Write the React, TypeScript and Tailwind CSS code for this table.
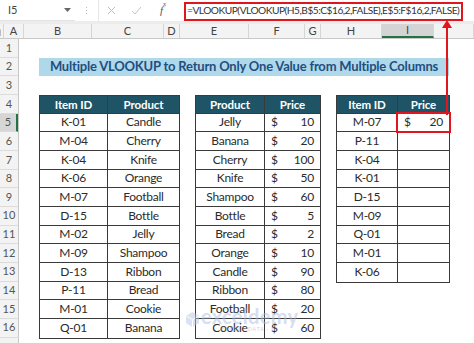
import React from "react";

const leftRows = [
  ["K-01", "Candle"],
  ["M-04", "Cherry"],
  ["K-04", "Knife"],
  ["K-06", "Orange"],
  ["M-07", "Football"],
  ["D-15", "Bottle"],
  ["M-02", "Jelly"],
  ["M-09", "Shampoo"],
  ["D-13", "Ribbon"],
  ["P-11", "Bread"],
  ["M-01", "Cookie"],
  ["Q-01", "Banana"],
];

const priceRows = [
  ["Jelly", "10"],
  ["Banana", "20"],
  ["Cherry", "100"],
  ["Knife", "50"],
  ["Shampoo", "60"],
  ["Bottle", "5"],
  ["Bread", "2"],
  ["Orange", "10"],
  ["Candle", "90"],
  ["Ribbon", "80"],
  ["Football", "20"],
  ["Cookie", "60"],
];

const lookupRows = [
  ["M-07", "20"],
  ["P-11", ""],
  ["K-04", ""],
  ["K-01", ""],
  ["D-15", ""],
  ["M-09", ""],
  ["Q-01", ""],
  ["M-01", ""],
  ["K-06", ""],
];

const columns = [
  { label: "A", w: "w-[20px]" },
  { label: "B", w: "w-[68px]" },
  { label: "C", w: "w-[72px]" },
  { label: "D", w: "w-[16px]" },
  { label: "E", w: "w-[69px]" },
  { label: "F", w: "w-[56px]" },
  { label: "G", w: "w-[16px]" },
  { label: "H", w: "w-[61px]" },
  { label: "I", w: "w-[52px]" },
  { label: "", w: "w-[40px]" },
];

function FormulaBar() {
  return (
    <div className="flex h-[21px] items-center bg-white">
      <div className="flex h-full w-[75px] items-center justify-between border-b border-[#e3e3e3] pl-[8px] pr-[4px] text-[11px] text-[#444]">
        <span>I5</span>
        <svg width="7" height="4" viewBox="0 0 7 4">
          <path d="M0 0h7L3.5 4z" fill="#666" />
        </svg>
      </div>
      <div className="flex h-full w-[23px] flex-col items-center justify-center gap-[2px]">
        <span className="h-[1px] w-[1px] bg-[#bbb]" />
        <span className="h-[1px] w-[1px] bg-[#bbb]" />
        <span className="h-[1px] w-[1px] bg-[#bbb]" />
      </div>
      <div className="flex h-full w-[86px] items-center border-l border-[#e6e6e6]">
        <div className="flex w-[24px] justify-center">
          <svg width="9" height="9" viewBox="0 0 9 9">
            <path d="M1 1l7 7M8 1L1 8" stroke="#bdbdbd" strokeWidth="1" />
          </svg>
        </div>
        <div className="flex w-[27px] justify-center">
          <svg width="11" height="9" viewBox="0 0 11 9">
            <path d="M1 5l3 3 6-7" stroke="#c4c4c4" strokeWidth="1" fill="none" />
          </svg>
        </div>
        <div className="flex w-[26px] justify-center font-['Liberation_Serif',serif] text-[11px] italic text-[#555]">
          f<sub className="text-[7px]">x</sub>
        </div>
      </div>
      <div className="mt-[1px] flex h-[19px] w-[279px] items-center overflow-hidden whitespace-nowrap border-2 border-[#e0161e] pl-[1px] text-[10.2px] tracking-[-0.5px] text-[#333]">
        =VLOOKUP(VLOOKUP(H5,B$5:C$16,2,FALSE),E$5:F$16,2,FALSE)
      </div>
    </div>
  );
}

function ColumnHeaders() {
  return (
    <div className="flex h-[15px] border-b border-[#c8c8c8] bg-[#f3f3f3] text-[11px] text-[#444]">
      <div className="relative w-[19px] border-r border-[#d6d6d6]">
        <svg className="absolute bottom-[2px] right-[2px]" width="7" height="7" viewBox="0 0 7 7">
          <path d="M7 0v7H0z" fill="#bcbcbc" />
        </svg>
      </div>
      {columns.map((c) => (
        <div
          key={c.w + c.label}
          className={`${c.w} flex shrink-0 items-center justify-center border-r border-[#d6d6d6] ${
            c.label === "I" ? "border-b-2 border-b-[#217346] bg-[#d4d4d4]" : ""
          }`}
        >
          {c.label}
        </div>
      ))}
    </div>
  );
}

function RowHeaders() {
  const rows = Array.from({ length: 17 }, (_, i) => i + 1);
  return (
    <div className="w-[19px] shrink-0 border-r border-[#c8c8c8] bg-[#f3f3f3] text-[11px] text-[#555]">
      {rows.map((n) => (
        <div
          key={n}
          className={`flex h-[18.67px] items-center justify-center border-b border-[#dcdcdc] ${
            n === 5 ? "border-r-2 border-r-[#217346] bg-[#d6d6d6]" : ""
          }`}
        >
          {n < 17 ? n : ""}
        </div>
      ))}
    </div>
  );
}

function HeadCell({ w, children }: { w: string; children: React.ReactNode }) {
  return (
    <div className={`${w} flex items-center justify-center border-r border-[#3a3a3a] font-bold text-white last:border-r-0`}>
      {children}
    </div>
  );
}

function Table({
  widths,
  heads,
  children,
}: {
  widths: [string, string];
  heads: [string, string];
  children: React.ReactNode;
}) {
  return (
    <div className="flex flex-col self-start border border-[#3a3a3a]">
      <div className="flex h-[17.67px] border-b border-[#3a3a3a] bg-[#1e5466] text-[11.5px] tracking-[-0.1px]">
        <HeadCell w={widths[0]}>{heads[0]}</HeadCell>
        <HeadCell w={widths[1]}>{heads[1]}</HeadCell>
      </div>
      {children}
    </div>
  );
}

function Price({ value }: { value: string }) {
  return (
    <div className="flex flex-1 items-center justify-between px-[6px]">
      <span>{value ? "$" : ""}</span>
      <span>{value}</span>
    </div>
  );
}

function Sheet() {
  return (
    <div className="flex flex-1 flex-col text-[12px] tracking-[-0.25px] text-[#2b2b2b]">
      <div className="h-[18.67px]" />
      <div className="flex h-[18.67px] pl-[20px]">
        <div className="flex w-[410px] items-center justify-center whitespace-nowrap bg-[#afd8ea] text-[13px] tracking-[-0.2px] font-bold text-[#1f4f80]">
          Multiple VLOOKUP to Return Only One Value from Multiple Columns
        </div>
      </div>
      <div className="h-[18.67px]" />
      <div className="flex pl-[20px]">
        <Table widths={["w-[68px]", "w-[71px]"]} heads={["Item ID", "Product"]}>
          {leftRows.map(([id, p]) => (
            <div key={id} className="flex h-[18.67px] border-b border-[#3a3a3a] last:border-b-0">
              <div className="flex w-[68px] items-center justify-center border-r border-[#3a3a3a]">{id}</div>
              <div className="flex w-[71px] items-center justify-center">{p}</div>
            </div>
          ))}
        </Table>
        <div className="w-[15px]" />
        <Table widths={["w-[69px]", "w-[55px]"]} heads={["Product", "Price"]}>
          {priceRows.map(([p, v]) => (
            <div key={p} className="flex h-[18.67px] border-b border-[#3a3a3a] last:border-b-0">
              <div className="flex w-[69px] items-center justify-center border-r border-[#3a3a3a]">{p}</div>
              <div className="flex w-[55px]">
                <Price value={v} />
              </div>
            </div>
          ))}
        </Table>
        <div className="w-[15px]" />
        <Table widths={["w-[61px]", "w-[51px]"]} heads={["Item ID", "Price"]}>
          {lookupRows.map(([id, v]) => (
            <div key={id} className="flex h-[18.67px] border-b border-[#3a3a3a] last:border-b-0">
              <div className="flex w-[61px] items-center justify-center border-r border-[#3a3a3a]">{id}</div>
              <div className="relative flex w-[51px]">
                <Price value={v} />
                {v && <div className="absolute -inset-x-[2px] -inset-y-[2px] border-2 border-[#e0161e]" />}
              </div>
            </div>
          ))}
        </Table>
      </div>
    </div>
  );
}

function Watermark() {
  return (
    <div className="pointer-events-none absolute left-[186px] top-[306px] flex items-center gap-[2px] opacity-50">
      <svg width="13" height="15" viewBox="0 0 13 15">
        <path d="M6.5 0L13 3.75v7.5L6.5 15 0 11.25v-7.5z" fill="#b9c8e6" />
        <path d="M6.5 7.5L13 3.75M6.5 7.5v7.5M6.5 7.5L0 3.75" stroke="#fff" strokeWidth="1" />
      </svg>
      <div className="flex flex-col items-center leading-none">
        <span className="text-[20px] font-bold tracking-[0.3px] text-[#aebfe3]">exceldemy</span>
        <span className="mt-[1px] text-[5px] tracking-[1px] text-[#9aa8c4]">EXCEL · DATA · BI</span>
      </div>
    </div>
  );
}

export default function App() {
  return (
    <div className="relative h-[343px] w-[474px] overflow-hidden bg-white font-['Lato',sans-serif]">
      <FormulaBar />
      <div className="h-[3px] bg-[#ececec]" />
      <ColumnHeaders />
      <div className="flex">
        <RowHeaders />
        <Sheet />
      </div>
      <svg className="pointer-events-none absolute left-[441px] top-[20px]" width="12" height="95" viewBox="0 0 12 95">
        <path d="M6 6V95" stroke="#e0161e" strokeWidth="2" />
        <path d="M6 0L11 8H1z" fill="#e0161e" />
      </svg>
      <Watermark />
    </div>
  );
}
